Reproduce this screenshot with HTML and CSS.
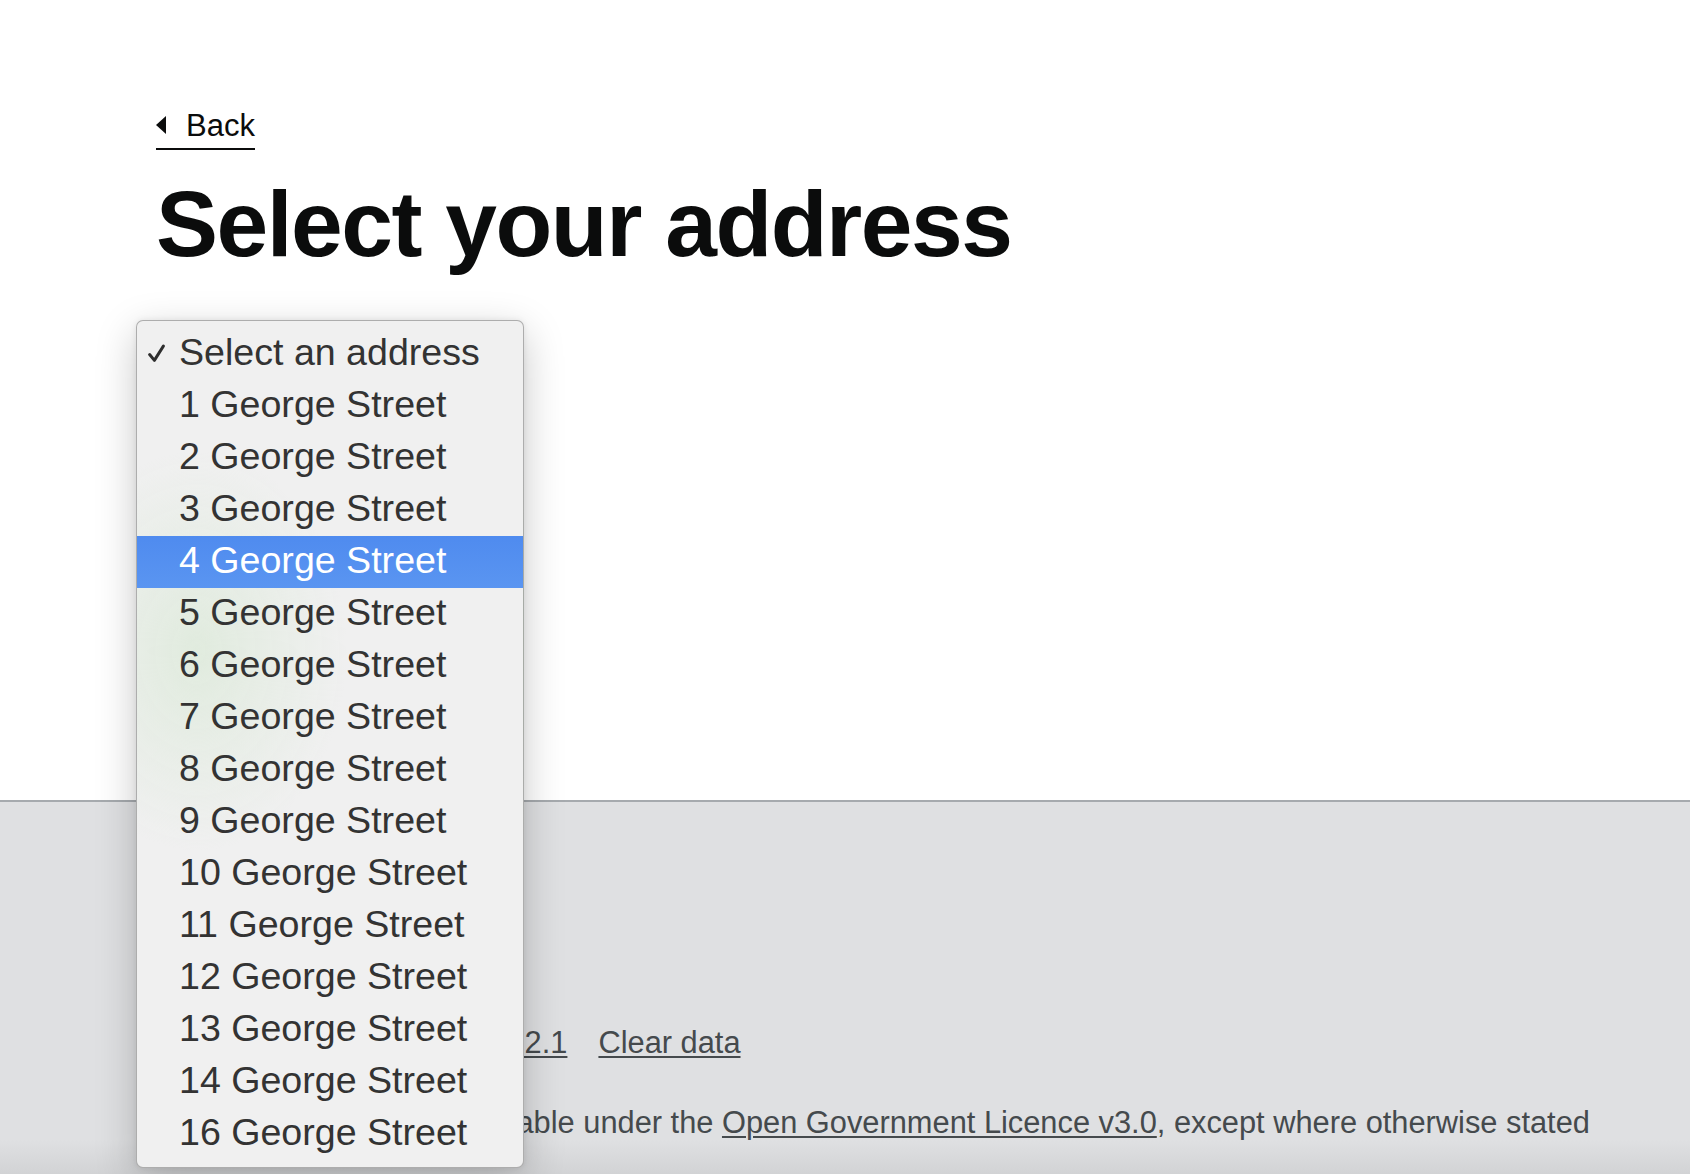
FILE: index.html
```html
<!DOCTYPE html>
<html lang="en">
<head>
<meta charset="utf-8">
<title>Select your address</title>
<link rel="stylesheet" href="styles.css">
</head>
<body>
<div class="page">
  <main class="main">
    <a class="back-link" href="#">Back</a>
    <h1 class="heading">Select your address</h1>
  </main>
  <footer class="footer">
    <ul class="footer-links">
      <li><a href="#">GOV.UK Prototype Kit v12.2.1</a></li>
      <li><a href="#">Clear data</a></li>
    </ul>
    <div class="licence">
      <svg class="ogl" viewBox="0 0 483 195" aria-hidden="true">
        <path fill="#505a5f" d="M421.5 142.8V.1l-50.7 32.3v161.1h112.4v-50.7zm-122.3-9.6A47.12 47.12 0 0 1 221 97.8c0-26 21.1-47.1 47.1-47.1 16.7 0 31.4 8.7 39.7 21.8l42.7-27.2A97.630 97.630 0 0 0 268.1 0c-36.5 0-68.3 20.1-85.1 49.7A98 98 0 0 0 97.8 0C43.9 0 0 43.9 0 97.8s43.9 97.8 97.8 97.8c36.5 0 68.3-20.1 85.1-49.7a97.76 97.76 0 0 0 149.6 25.4l19.4 22.2h3v-87.8h-80l24.3 27.5zM97.8 145c-26 0-47.1-21.1-47.1-47.1s21.1-47.1 47.1-47.1 47.2 21 47.2 47S123.8 145 97.8 145"/>
      </svg>
      <span>All content is available under the <a href="#">Open Government Licence v3.0</a>, except where otherwise stated</span>
    </div>
  </footer>

  <div class="menu" role="listbox">
    <div class="option checked"><svg class="check" viewBox="0 0 16 18"><polyline points="1.5,10 6,15.5 14.5,2" fill="none" stroke="#2e2e2e" stroke-width="2.8" stroke-linecap="round" stroke-linejoin="round"/></svg>Select an address</div>
    <div class="option">1 George Street</div>
    <div class="option">2 George Street</div>
    <div class="option">3 George Street</div>
    <div class="option selected">4 George Street</div>
    <div class="option">5 George Street</div>
    <div class="option">6 George Street</div>
    <div class="option">7 George Street</div>
    <div class="option">8 George Street</div>
    <div class="option">9 George Street</div>
    <div class="option">10 George Street</div>
    <div class="option">11 George Street</div>
    <div class="option">12 George Street</div>
    <div class="option">13 George Street</div>
    <div class="option">14 George Street</div>
    <div class="option">16 George Street</div>
  </div>
</div>
</body>
</html>
```

FILE: styles.css
```css
html, body {
  margin: 0;
  padding: 0;
  background: #ffffff;
}

body {
  font-family: "Liberation Sans", Arial, sans-serif;
  color: #0b0c0c;
  overflow: hidden;
}

.page {
  position: relative;
  width: 1690px;
  height: 1174px;
  display: flex;
  flex-direction: column;
}

.main {
  box-sizing: border-box;
  height: 800px;
  padding: 108px 0 0 156px;
  display: flex;
  flex-direction: column;
  align-items: flex-start;
}

.back-link {
  display: inline-flex;
  align-items: center;
  font-size: 31px;
  line-height: 36px;
  padding-bottom: 4px;
  color: #0b0c0c;
  text-decoration: none;
  border-bottom: 2px solid #0b0c0c;
}

.back-link::before {
  content: "";
  display: block;
  width: 0;
  height: 0;
  border-style: solid;
  border-width: 9px 10px 9px 0;
  border-color: transparent #0b0c0c transparent transparent;
  margin: 0 20px 0 0;
  position: relative;
  top: -1px;
}

.heading {
  margin: 24px 0 0 0;
  font-size: 93px;
  line-height: 100px;
  font-weight: 700;
  letter-spacing: -1.5px;
  color: #0b0c0c;
}

.footer {
  flex: 1;
  box-sizing: border-box;
  border-top: 2px solid #a6aaae;
  background: linear-gradient(to bottom, #dfe0e2 0, #dfe0e2 338px, #d2d3d5 100%);
  padding: 221px 0 0 156px;
  font-size: 30.8px;
  line-height: 40px;
  color: #454a4d;
}

.footer a {
  color: #454a4d;
  text-decoration: underline;
  text-underline-offset: 3px;
  text-decoration-thickness: 2px;
}

.footer-links {
  list-style: none;
  margin: 0;
  padding: 0;
  display: flex;
  gap: 31px;
}

.licence {
  margin-top: 40px;
  display: flex;
  align-items: center;
  gap: 32px;
}

.ogl {
  width: 82px;
  height: 33px;
  flex: none;
}

/* native select popup, drawn over the page */
.menu {
  position: absolute;
  left: 136px;
  top: 320px;
  width: 388px;
  box-sizing: border-box;
  padding: 7px 0 7px;
  border: 1px solid rgba(0, 0, 0, 0.28);
  border-radius: 7px;
  background:
    radial-gradient(ellipse 150px 200px at 60px 330px, rgba(214, 232, 210, 0.6), rgba(214, 232, 210, 0) 100%),
    #f0f0f0;
  box-shadow: 0 12px 40px rgba(0, 0, 0, 0.22), 0 0 6px rgba(0, 0, 0, 0.08);
  font-family: "Liberation Sans", Arial, sans-serif;
  font-size: 37.6px;
  color: #333333;
}

.option {
  position: relative;
  height: 52px;
  box-sizing: border-box;
  line-height: 48px;
  padding: 0 0 4px 42px;
  white-space: nowrap;
}

.option.selected {
  background: linear-gradient(to bottom, #4f8bef, #5a95f1);
  color: #ffffff;
}

.check {
  position: absolute;
  left: 11px;
  top: 16px;
  width: 17px;
  height: 19px;
}
```
